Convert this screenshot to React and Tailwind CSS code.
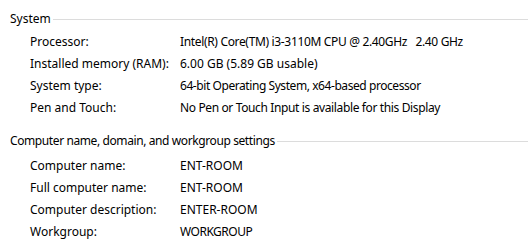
import React from "react";

function Header({ title, className = "", textClass = "" }) {
  return (
    <div className={"flex items-center h-[22px] pl-[10px] " + className}>
      <span className={"whitespace-nowrap " + textClass}>{title}</span>
      <div className="flex-1 h-px bg-[#dcdcdc] ml-[2px]" />
    </div>
  );
}

function Row({ label, value, valueClass = "" }) {
  return (
    <div className="flex items-center h-[22px] pl-[30px] whitespace-nowrap">
      <span className="w-[150px] shrink-0">{label}</span>
      <span className={"whitespace-pre " + valueClass}>{value}</span>
    </div>
  );
}

export default function App() {
  return (
    <div className="w-[528px] h-[251px] bg-white text-[12px] text-black overflow-hidden pt-[8px] font-['Noto_Sans',sans-serif]">
      <Header title="System" />
      <div className="mt-[1px]">
        <Row label="Processor:" value="Intel(R) Core(TM) i3-3110M CPU @ 2.40GHz   2.40 GHz" valueClass="tracking-[-0.34px]" />
        <Row label="Installed memory (RAM):" value="6.00 GB (5.89 GB usable)" />
        <Row label="System type:" value="64-bit Operating System, x64-based processor" valueClass="tracking-[-0.43px]" />
        <Row label="Pen and Touch:" value="No Pen or Touch Input is available for this Display" valueClass="tracking-[-0.37px]" />
      </div>
      <Header title="Computer name, domain, and workgroup settings" className="mt-[11px]" textClass="tracking-[-0.4px]" />
      <div className="mt-[3px]">
        <Row label="Computer name:" value="ENT-ROOM" />
        <Row label="Full computer name:" value="ENT-ROOM" />
        <Row label="Computer description:" value="ENTER-ROOM" />
        <Row label="Workgroup:" value="WORKGROUP" valueClass="tracking-[-0.5px]" />
      </div>
    </div>
  );
}
